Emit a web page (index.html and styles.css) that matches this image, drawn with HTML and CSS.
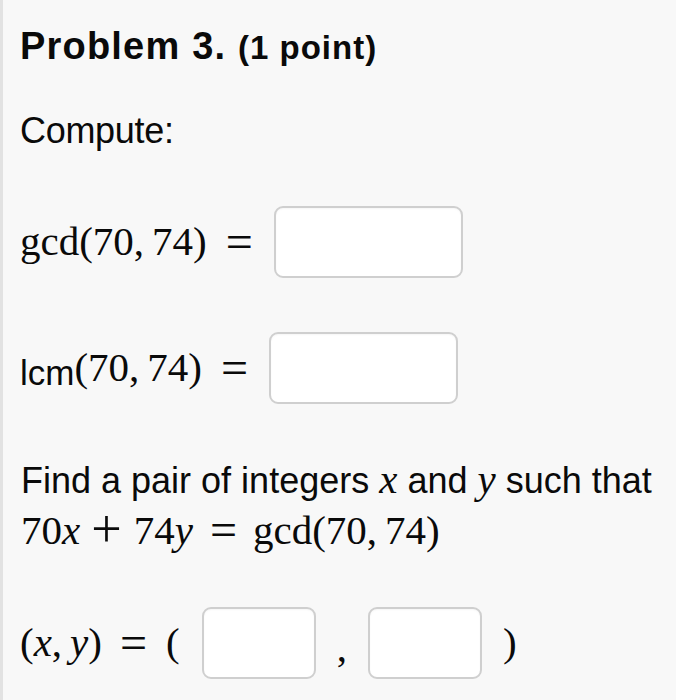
FILE: index.html
```html
<!DOCTYPE html>
<html lang="en">
<head>
<meta charset="utf-8">
<title>Problem 3</title>
<link rel="stylesheet" href="styles.css">
</head>
<body>
<div class="page">
  <h1 class="title">Problem 3. <span class="pts">(1 point)</span></h1>
  <p class="lead">Compute:</p>

  <div class="row row-gcd">
    <span class="math">gcd(70,<span class="thin"></span>74)</span>
    <span class="math eq">=</span>
    <span class="ans ans-wide"></span>
  </div>

  <div class="row row-lcm">
    <span class="op">lcm</span><span class="math">(70,<span class="thin"></span>74)</span>
    <span class="math eq">=</span>
    <span class="ans ans-wide"></span>
  </div>

  <p class="para">Find a pair of integers <span class="math"><i>x</i></span> and <span class="math"><i>y</i></span> such that<br><span class="math">70<i>x</i><span class="bin">+</span>74<i>y</i><span class="rel">=</span>gcd(70,<span class="thin"></span>74)</span></p>

  <div class="row row-pair">
    <span class="math">(<i>x</i>,<span class="thin"></span><i>y</i>)</span>
    <span class="math eq">=</span>
    <span class="math paren">(</span>
    <span class="ans ans-small"></span>
    <span class="math comma">,</span>
    <span class="ans ans-small"></span>
    <span class="math paren close">)</span>
  </div>
</div>
</body>
</html>
```

FILE: styles.css
```css
html, body {
  margin: 0;
  padding: 0;
  background: #f8f8f8;
}

.page {
  min-height: 700px;
  box-sizing: border-box;
  border-left: 3px solid #e2e2e2;
  padding: 24px 0 0 17px;
  font-family: "Liberation Sans", Arial, sans-serif;
  font-size: 36px;
  color: #0a0a0a;
}

.title {
  margin: 0;
  font-size: 38px;
  line-height: 44px;
  font-weight: bold;
  letter-spacing: 1.2px;
}

.pts {
  font-size: 33px;
  letter-spacing: 1px;
}

.lead {
  margin: 39px 0 0 0;
  line-height: 44px;
  letter-spacing: -0.3px;
}

.math {
  font-family: "Liberation Serif", "Times New Roman", serif;
  font-size: 41px;
  line-height: 1;
}

.math i {
  font-style: italic;
}

.thin {
  display: inline-block;
  width: 8px;
}

.bin {
  display: inline-block;
  font-size: 54px;
  line-height: 30px;
  margin: 0 12px 0 11px;
  vertical-align: -3px;
}

.rel {
  display: inline-block;
  font-size: 48px;
  line-height: 30px;
  margin: 0 16px 0 17px;
  vertical-align: -2px;
}

.row {
  display: flex;
  align-items: center;
  height: 72px;
}

.row-gcd {
  margin-top: 53px;
}

.row-lcm {
  margin-top: 54px;
}

.op {
  font-size: 35px;
  line-height: 1;
  padding-top: 8px;
}

.row .math {
  padding-bottom: 2px;
}

.row .eq {
  font-size: 48px;
  padding-bottom: 0;
  margin: 0 21px 0 19px;
}

.ans {
  display: block;
  height: 72px;
  box-sizing: border-box;
  background: #ffffff;
  border: 2px solid #cfcfcf;
  border-radius: 9px;
  box-shadow: inset 0 1px 2px rgba(0, 0, 0, 0.04);
}

.ans-wide {
  width: 189px;
}

.ans-small {
  width: 114px;
}

.para {
  margin: 51px 0 0 1px;
  line-height: 51px;
}

.row-pair {
  margin-top: 50px;
}

.row-pair .eq {
  margin: 0 19px 0 18px;
}

.paren {
  margin-right: 22px;
}

.comma {
  margin: 0 21px 0 21px;
  padding-top: 10px;
}

.close {
  margin: 0 0 0 21px;
}
```
